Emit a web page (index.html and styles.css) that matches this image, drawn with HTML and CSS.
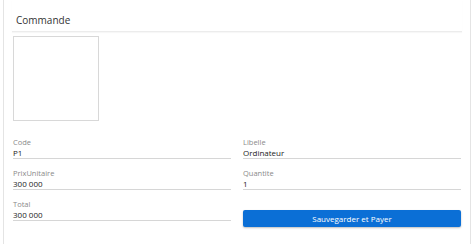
FILE: index.html
```html
<!DOCTYPE html>
<html lang="fr">
<head>
    <meta charset="UTF-8">
    <meta name="viewport" content="width=device-width, initial-scale=1.0">
    <title>Commande</title>
    <link rel="stylesheet" href="styles.css">
</head>
<body>
    <div class="card">
        <div class="card-header">Commande</div>
        <div class="card-body">
            <div class="photo"></div>
            <div class="fields">
                <div class="field">
                    <label>Code</label>
                    <div class="value">P1</div>
                </div>
                <div class="field">
                    <label>Libelle</label>
                    <div class="value">Ordinateur</div>
                </div>
                <div class="field">
                    <label>PrixUnitaire</label>
                    <div class="value">300 000</div>
                </div>
                <div class="field">
                    <label>Quantite</label>
                    <div class="value">1</div>
                </div>
                <div class="field">
                    <label>Total</label>
                    <div class="value">300 000</div>
                </div>
                <button type="button" class="pay-btn">Sauvegarder et Payer</button>
            </div>
        </div>
    </div>
</body>
</html>
```

FILE: styles.css
```css
html, body {
    margin: 0;
    padding: 0;
    overflow: hidden;
}
body {
    font-family: 'Open Sans', 'Liberation Sans', sans-serif;
    background: #fff;
    color: #333;
}
.card {
    margin-left: 3px;
    width: 468px;
    height: 244px;
    box-sizing: border-box;
    padding: 0 8px;
    border-left: 1px solid #e4e4e4;
    border-right: 1px solid #e4e4e4;
}
.card-header {
    padding: 13px 0 4px 4px;
    font-size: 10px;
    line-height: 14px;
    color: #333;
    border-bottom: 1px solid #ececec;
    box-shadow: 0 1px 1px rgba(0, 0, 0, 0.03);
}
.card-body {
    padding: 4px 1px 0 1px;
}
.photo {
    width: 84px;
    height: 83px;
    border: 1px solid #d8d8d8;
}
.fields {
    display: grid;
    grid-template-columns: 1fr 1fr;
    column-gap: 12px;
    row-gap: 9px;
    margin-top: 16px;
    align-items: start;
}
.field label {
    display: block;
    font-size: 7.5px;
    line-height: 10px;
    color: #8a8a8a;
}
.field .value {
    font-size: 8px;
    line-height: 11px;
    color: #222;
    border-bottom: 1px solid #d6d6d6;
}
.pay-btn {
    margin-top: 11px;
    height: 17px;
    width: 100%;
    padding: 0;
    border: none;
    border-radius: 2px;
    background-color: #0b6fd6;
    color: #fff;
    font-family: 'Open Sans', 'Liberation Sans', sans-serif;
    font-size: 8px;
    box-shadow: 0 1px 2px rgba(0, 0, 0, 0.25);
    cursor: pointer;
}
```
